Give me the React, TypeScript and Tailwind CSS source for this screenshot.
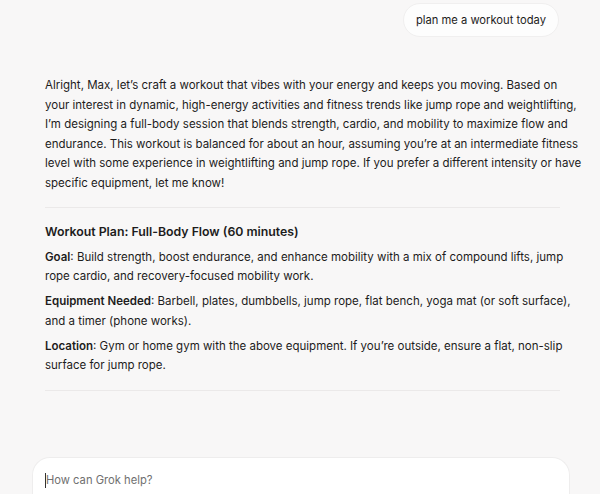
import React from 'react'

const font = { fontFamily: 'Inter, "Noto Sans", sans-serif' }

function Field({ label, lines }: { label: string; lines: string[] }) {
  return (
    <p className="mt-[5.5px]">
      <span className="font-semibold">{label}</span>: {lines[0]}
      <br />
      {lines[1]}
    </p>
  )
}

export default function App() {
  return (
    <div
      className="relative h-[494px] w-[600px] overflow-hidden bg-[#f8f7f7] text-[#1d1c1c]"
      style={font}
    >
      {/* User message */}
      <div className="flex justify-end pr-[41px] pt-[3px]">
        <div className="flex h-[34px] items-center rounded-[17px] border border-[#f0efef] bg-[#fdfdfd] px-[12px] text-[11.2px]">
          plan me a workout today
        </div>
      </div>

      {/* Assistant reply */}
      <div className="ml-[45px] mt-[38px] w-[515px] whitespace-nowrap text-[11.5px] leading-[19.5px]">
        <p className="pt-px">
          Alright, Max, let’s craft a workout that vibes with your energy and keeps you moving. Based on
          <br />
          your interest in dynamic, high-energy activities and fitness trends like jump rope and weightlifting,
          <br />
          I’m designing a full-body session that blends strength, cardio, and mobility to maximize flow and
          <br />
          endurance. This workout is balanced for about an hour, assuming you’re at an intermediate fitness
          <br />
          level with some experience in weightlifting and jump rope. If you prefer a different intensity or have
          <br />
          specific equipment, let me know!
        </p>

        <div className="mt-[14px] h-px bg-[#ebe9e9]" />

        <h3 className="mt-[14px] text-[12.3px] font-semibold leading-[20px]">
          Workout Plan: Full-Body Flow (60 minutes)
        </h3>

        <Field
          label="Goal"
          lines={[
            'Build strength, boost endurance, and enhance mobility with a mix of compound lifts, jump',
            'rope cardio, and recovery-focused mobility work.',
          ]}
        />
        <Field
          label="Equipment Needed"
          lines={[
            'Barbell, plates, dumbbells, jump rope, flat bench, yoga mat (or soft surface),',
            'and a timer (phone works).',
          ]}
        />
        <Field
          label="Location"
          lines={[
            'Gym or home gym with the above equipment. If you’re outside, ensure a flat, non-slip',
            'surface for jump rope.',
          ]}
        />

        <div className="mt-[14px] h-px bg-[#ebe9e9]" />
      </div>

      {/* Composer */}
      <div className="absolute bottom-0 left-[32px] right-[30px] h-[37px] rounded-t-[18px] border border-b-0 border-[#eeeded] bg-white">
        <div className="flex items-center pl-[12px] pt-[13px] text-[11.2px] leading-[18px] text-[#707070]">
          <span className="inline-block h-[15px] w-px bg-[#333]" />
          How can Grok help?
        </div>
      </div>
    </div>
  )
}
